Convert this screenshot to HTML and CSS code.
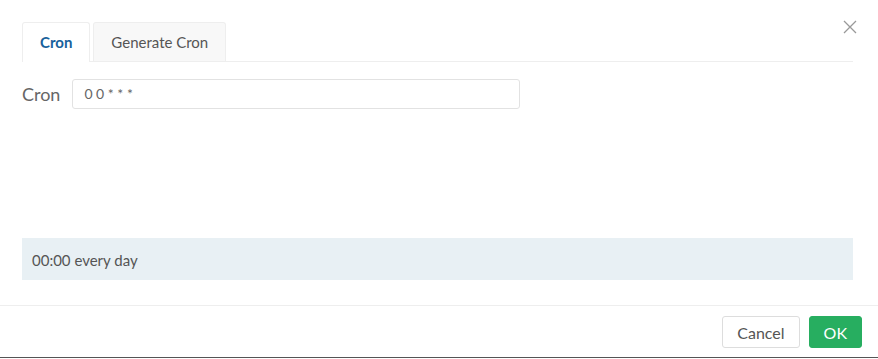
FILE: index.html
```html
<!DOCTYPE html>
<html>
<head>
<meta charset="utf-8">
<link rel="stylesheet" href="styles.css">
</head>
<body>
<div class="modal">
  <div class="modal-body">
    <div class="tabs">
      <div class="tab active">Cron</div>
      <div class="tab">Generate Cron</div>
    </div>
    <div class="field">
      <label class="label">Cron</label>
      <div class="input">0 0 * * *</div>
    </div>
    <div class="desc">00:00 every day</div>
  </div>
  <div class="modal-footer">
    <button class="btn btn-default">Cancel</button>
    <button class="btn btn-primary">OK</button>
  </div>
  <button class="close" aria-label="close">
    <svg width="14" height="14" viewBox="0 0 14 14"><path d="M1 1L13 13M13 1L1 13" stroke="#999" stroke-width="1.3" fill="none"/></svg>
  </button>
</div>
</body>
</html>
```
FILE: styles.css
```css
html, body {
  margin: 0;
  padding: 0;
  background: #fff;
}
body {
  font-family: Lato, "Open Sans", sans-serif;
  color: #555;
  width: 878px;
  height: 359px;
  overflow: hidden;
}
.modal {
  position: relative;
  height: 358px;
  box-sizing: border-box;
  border-bottom: 1px solid #555;
  display: flex;
  flex-direction: column;
}
.modal-body {
  box-sizing: border-box;
  padding: 22px 25px 0 22px;
  height: 280px;
  flex-shrink: 0;
  display: flex;
  flex-direction: column;
}
.tabs {
  display: flex;
  gap: 3px;
  border-bottom: 1px solid #eee;
  height: 39px;
  flex-shrink: 0;
}
.tab {
  height: 39px;
  box-sizing: border-box;
  border: 1px solid #eee;
  border-bottom: none;
  border-radius: 3px 3px 0 0;
  background: #f8f8f8;
  font-size: 15px;
  line-height: 38px;
  padding: 0 17px;
  color: #555;
}
.tab.active {
  background: #fff;
  color: #17619b;
  font-weight: 700;
  height: 40px;
  margin-bottom: -1px;
}
.field {
  display: flex;
  align-items: center;
  margin-top: 17px;
  gap: 12px;
}
.label {
  font-size: 18px;
  color: #666;
}
.input {
  width: 448px;
  height: 30px;
  box-sizing: border-box;
  border: 1px solid #e2e2e2;
  border-radius: 3px;
  padding: 0 11px;
  font-size: 14px;
  line-height: 28px;
  color: #666;
}
.desc {
  margin-top: auto;
  height: 42px;
  flex-shrink: 0;
  background: #e8f0f4;
  font-size: 15px;
  line-height: 44px;
  padding: 0 10px;
  color: #555;
}
.modal-footer {
  flex-shrink: 0;
  margin-top: 25px;
  border-top: 1px solid #eee;
  display: flex;
  justify-content: flex-end;
  gap: 9px;
  padding: 10px 16px 0 0;
}
.btn {
  font-family: inherit;
  font-size: 16px;
  height: 32px;
  border-radius: 3px;
  padding: 0 14px;
  cursor: pointer;
}
.btn-default {
  background: #fff;
  border: 1px solid #ddd;
  color: #555;
}
.btn-primary {
  background: #27ae60;
  border: 1px solid #27ae60;
  color: #fff;
}
.close {
  position: absolute;
  top: 20px;
  right: 21px;
  padding: 0;
  border: none;
  background: none;
  width: 14px;
  height: 14px;
  line-height: 0;
}
```
